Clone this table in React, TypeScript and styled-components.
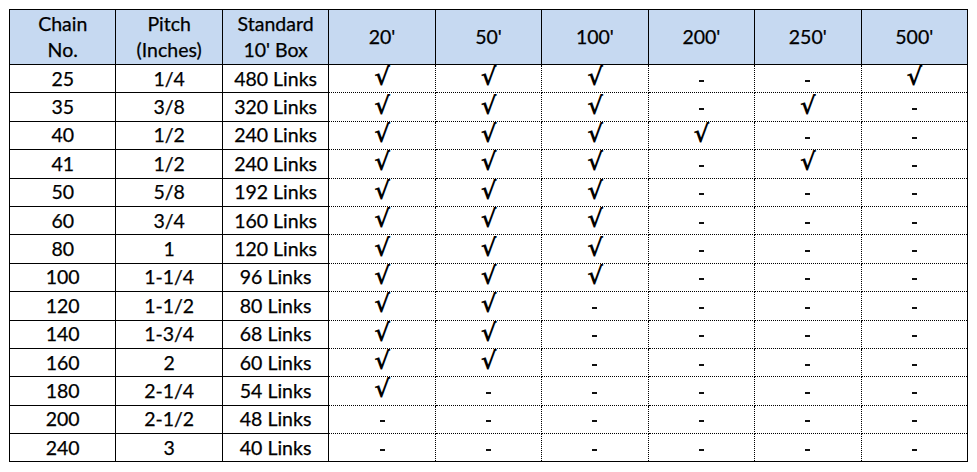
import React from "react";
import styled, { createGlobalStyle } from "styled-components";

const Global = createGlobalStyle`
  html, body { margin: 0; padding: 0; background: #ffffff; }
  body { font-family: Lato, "Open Sans", "Liberation Sans", sans-serif; }
`;

const Page = styled.div`
  padding: 9px 0 0 9px;
`;

const Table = styled.table`
  border-collapse: collapse;
  table-layout: fixed;
  width: 959px;
  font-family: Lato, "Liberation Sans", sans-serif;
  font-size: 19.5px;
  color: #000;
  -webkit-text-stroke: 0.25px #000;
  border: 1.5px solid #000;
`;

const HeadCell = styled.th`
  background: #c6d9f1;
  height: 54px;
  font-weight: 400;
  line-height: 26px;
  padding: 0;
  text-align: center;
  vertical-align: middle;
  border: 1.5px solid #000;
`;

const Cell = styled.td<{ $dotted?: boolean }>`
  height: 27.4px;
  padding: 0;
  text-align: center;
  vertical-align: middle;
  line-height: 20px;
  border: ${(p) => (p.$dotted ? "1px dotted #000" : "1.5px solid #000")};
`;

const Check = styled.span`
  font-family: "DejaVu Sans", sans-serif;
  font-weight: 700;
  font-size: 24px;
  line-height: 20px;
  -webkit-text-stroke: 0;
  position: relative;
  top: -1px;
`;

const Dash = styled.span`
  display: inline-block;
  width: 5px;
  height: 2px;
  background: #111;
  vertical-align: middle;
  position: relative;
  top: 0px;
`;

type Row = [string, string, string, string];

const rows: Row[] = [
  ["25", "1/4", "480 Links", "yyy--y"],
  ["35", "3/8", "320 Links", "yyy-y-"],
  ["40", "1/2", "240 Links", "yyyy--"],
  ["41", "1/2", "240 Links", "yyy-y-"],
  ["50", "5/8", "192 Links", "yyy---"],
  ["60", "3/4", "160 Links", "yyy---"],
  ["80", "1", "120 Links", "yyy---"],
  ["100", "1-1/4", "96 Links", "yyy---"],
  ["120", "1-1/2", "80 Links", "yy----"],
  ["140", "1-3/4", "68 Links", "yy----"],
  ["160", "2", "60 Links", "yy----"],
  ["180", "2-1/4", "54 Links", "y-----"],
  ["200", "2-1/2", "48 Links", "------"],
  ["240", "3", "40 Links", "------"],
];

const lengths = ["20'", "50'", "100'", "200'", "250'", "500'"];

export default function App() {
  return (
    <>
      <Global />
      <Page>
        <Table>
          <thead>
            <tr>
              <HeadCell>
                Chain
                <br />
                No.
              </HeadCell>
              <HeadCell>
                Pitch
                <br />
                (Inches)
              </HeadCell>
              <HeadCell>
                Standard
                <br />
                10' Box
              </HeadCell>
              {lengths.map((l) => (
                <HeadCell key={l}>{l}</HeadCell>
              ))}
            </tr>
          </thead>
          <tbody>
            {rows.map((r) => (
              <tr key={r[0]}>
                <Cell>{r[0]}</Cell>
                <Cell>{r[1]}</Cell>
                <Cell>{r[2]}</Cell>
                {r[3].split("").map((c, i) => (
                  <Cell $dotted key={i}>
                    {c === "y" ? <Check>√</Check> : <Dash />}
                  </Cell>
                ))}
              </tr>
            ))}
          </tbody>
        </Table>
      </Page>
    </>
  );
}
